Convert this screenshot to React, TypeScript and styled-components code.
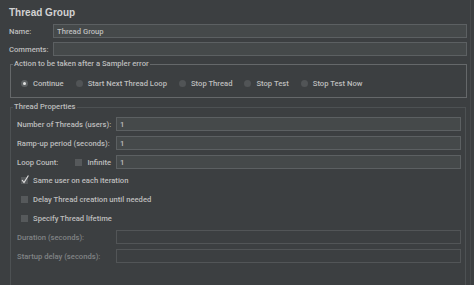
import React from "react";
import styled, { createGlobalStyle } from "styled-components";

const FONT = `Roboto, "Liberation Sans", Arial, sans-serif`;

const Global = createGlobalStyle`
  html, body { margin: 0; padding: 0; background: #3c3f41; }
  body { font-family: ${FONT}; }
`;

const Page = styled.div`
  width: 471px;
  height: 285px;
  overflow: hidden;
  box-sizing: border-box;
  padding: 6px 3px 0 9px;
  border-right: 1px solid #474a4c;
  display: flex;
  flex-direction: column;
  color: #bdbdbd;
  font-size: 7.65px;
  font-weight: 500;
  background: #3c3f41;
`;

const Title = styled.div`
  font-family: "Liberation Sans", Arial, sans-serif;
  font-size: 10px;
  font-weight: bold;
  color: #d2d2d2;
  line-height: 14px;
  height: 14px;
`;

const TopRows = styled.div`
  display: flex;
  flex-direction: column;
  gap: 4px;
  margin-top: 4px;
`;

const Row = styled.div`
  display: flex;
  align-items: center;
  height: 14px;
`;

const LabelCell = styled.span<{ $w: number; $dim?: boolean }>`
  width: ${(p) => p.$w}px;
  flex: none;
  color: ${(p) => (p.$dim ? "#808385" : "#bdbdbd")};
  white-space: nowrap;
  display: flex;
  align-items: center;
`;

const Field = styled.input<{ $disabled?: boolean }>`
  flex: 1;
  min-width: 0;
  height: 14px;
  box-sizing: border-box;
  margin: 0;
  border: 1px solid ${(p) => (p.$disabled ? "#525557" : "#5c6062")};
  background: ${(p) => (p.$disabled ? "#3c3f41" : "#45494a")};
  color: #bdbdbd;
  font-family: ${FONT};
  font-weight: 500;
  font-size: 7.65px;
  padding: 0 0 0 ${(p) => (p.$disabled ? 4 : 3)}px;
  outline: none;
`;

const Group = styled.fieldset<{ $strong?: boolean; $top: number; $right: number }>`
  margin: ${(p) => p.$top}px ${(p) => p.$right}px 0 1px;
  padding: 0 4px 0 6px;
  border: 1px solid ${(p) => (p.$strong ? "#65686a" : "#4d5153")};
  min-width: 0;
  display: flex;
  flex-direction: column;
`;

const Legend = styled.legend`
  margin-left: -4px;
  padding: 0 1px;
  line-height: 10px;
  height: 10px;
  font-size: 7.65px;
  color: #bdbdbd;
`;

const RadioRow = styled.div`
  display: flex;
  align-items: center;
  gap: 12px;
  height: 10px;
  padding: 9px 0 9px 4px;
`;

const RadioItem = styled.label`
  display: flex;
  align-items: center;
  gap: 5px;
  white-space: nowrap;
`;

const RadioDot = styled.span<{ $on?: boolean }>`
  width: 7px;
  height: 7px;
  border-radius: 50%;
  background: ${(p) => (p.$on ? "#5d6163" : "#515456")};
  display: flex;
  align-items: center;
  justify-content: center;
  &::after {
    content: "";
    width: 3px;
    height: 3px;
    border-radius: 50%;
    background: ${(p) => (p.$on ? "#e2e2e2" : "transparent")};
  }
`;

const Props = styled.div`
  display: flex;
  flex-direction: column;
  gap: 5px;
  padding-top: 5px;
  padding-bottom: 30px;
`;

const CheckRows = styled.div`
  display: flex;
  flex-direction: column;
  gap: 5px;
  margin-top: -1px;
  padding-left: 4px;
`;

const CheckItem = styled.label`
  display: flex;
  align-items: center;
  gap: 5px;
  height: 14px;
  white-space: nowrap;
`;

const Box = styled.span`
  position: relative;
  width: 7px;
  height: 7px;
  flex: none;
  background: #56595b;
`;

const Tick = styled.svg`
  position: absolute;
  left: 0;
  top: -2px;
  overflow: visible;
`;

const Spacer = styled.span<{ $w: number }>`
  width: ${(p) => p.$w}px;
  flex: none;
`;

function Check({ on }: { on?: boolean }) {
  return (
    <Box>
      {on && (
        <Tick width="8" height="9" viewBox="0 0 8 9">
          <path d="M1 5 L3 7.6 L7.4 0.5" stroke="#e0e0e0" strokeWidth="1.1" fill="none" />
        </Tick>
      )}
    </Box>
  );
}

export default function App() {
  return (
    <>
      <Global />
      <Page>
        <Title>Thread Group</Title>
        <TopRows>
          <Row>
            <LabelCell $w={44}>Name:</LabelCell>
            <Field readOnly defaultValue="Thread Group" />
          </Row>
          <Row>
            <LabelCell $w={44}>Comments:</LabelCell>
            <Field readOnly defaultValue="" />
          </Row>
        </TopRows>

        <Group $strong $top={3} $right={0}>
          <Legend>Action to be taken after a Sampler error</Legend>
          <RadioRow>
            <RadioItem><RadioDot $on />Continue</RadioItem>
            <RadioItem><RadioDot />Start Next Thread Loop</RadioItem>
            <RadioItem><RadioDot />Stop Thread</RadioItem>
            <RadioItem><RadioDot />Stop Test</RadioItem>
            <RadioItem><RadioDot />Stop Test Now</RadioItem>
          </RadioRow>
        </Group>

        <Group $top={4} $right={1}>
          <Legend>Thread Properties</Legend>
          <Props>
            <Row>
              <LabelCell $w={99}>Number of Threads (users):</LabelCell>
              <Field readOnly defaultValue="1" />
            </Row>
            <Row>
              <LabelCell $w={99}>Ramp-up period (seconds):</LabelCell>
              <Field readOnly defaultValue="1" />
            </Row>
            <Row>
              <LabelCell $w={99}>
                Loop Count:
                <Spacer $w={17} />
                <CheckItem><Check />Infinite</CheckItem>
              </LabelCell>
              <Field readOnly defaultValue="1" />
            </Row>
            <CheckRows>
              <CheckItem><Check on />Same user on each iteration</CheckItem>
              <CheckItem><Check />Delay Thread creation until needed</CheckItem>
              <CheckItem><Check />Specify Thread lifetime</CheckItem>
            </CheckRows>
            <Row>
              <LabelCell $w={99} $dim>Duration (seconds):</LabelCell>
              <Field $disabled readOnly defaultValue="" />
            </Row>
            <Row>
              <LabelCell $w={99} $dim>Startup delay (seconds):</LabelCell>
              <Field $disabled readOnly defaultValue="" />
            </Row>
          </Props>
        </Group>
      </Page>
    </>
  );
}
